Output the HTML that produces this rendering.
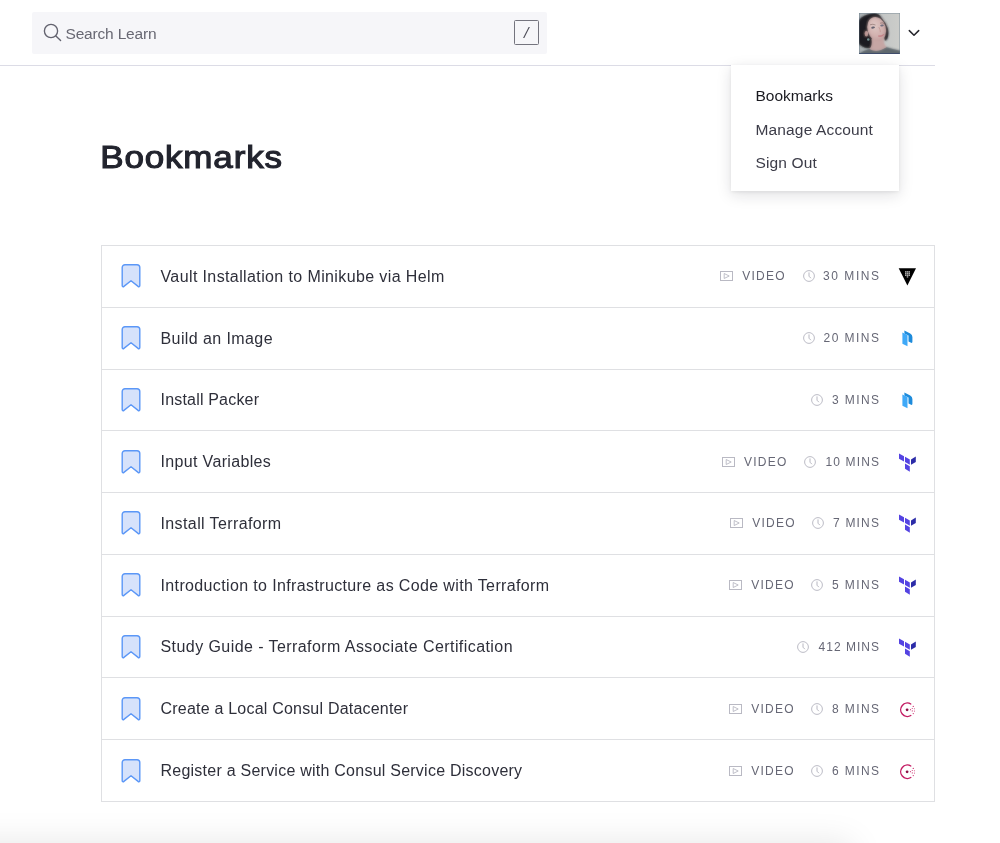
<!DOCTYPE html>
<html lang="en">
<head>
<meta charset="utf-8">
<title>Bookmarks</title>
<style>
*{box-sizing:border-box}
html,body{margin:0;padding:0;background:#fff}
body{width:1000px;height:843px;position:relative;overflow:hidden;font-family:"Liberation Sans",Arial,sans-serif;color:#2b2b36}
.page{position:absolute;left:0;top:0;width:1000px;height:843px;overflow:hidden;will-change:transform}
.hdr{position:absolute;left:0;top:0;width:935px;height:66px;border-bottom:1px solid #dcdce6}
.search{position:absolute;left:32px;top:12px;width:515px;height:42px;background:#f6f6f9;border-radius:2px}
.search svg.mag{position:absolute;left:11px;top:11px}
.search .ph{position:absolute;left:33.5px;top:1px;line-height:42px;font-size:15.5px;letter-spacing:-.18px;color:#686873}
.search .key{position:absolute;left:482px;top:8px;width:25px;height:25px;border:1px solid #74747e;border-radius:1.5px;font-family:"Liberation Mono",monospace;font-size:14px;line-height:27px;text-align:center;color:#4f4f5a}
.avatar{position:absolute;left:859px;top:13px;width:41px;height:41px;overflow:hidden}
.chev{position:absolute;left:907px;top:27px}
.menu{position:absolute;left:731px;top:65px;width:168px;height:126px;background:#fff;box-shadow:0 4px 14px rgba(20,20,40,.13),0 1px 4px rgba(20,20,40,.08)}
.menu a{position:absolute;left:24.5px;font-size:15.5px;line-height:20px;color:#3c3c48;text-decoration:none;white-space:nowrap}
h1{position:absolute;left:100.2px;top:133.8px;margin:0;font-size:35px;line-height:44px;font-weight:400;color:#22242e;-webkit-text-stroke:1.25px #22242e;letter-spacing:.85px;transform:scaleY(.88);transform-origin:0 33px}
.list{position:absolute;left:101px;top:245px;width:834px;border:1px solid #dfe0e3;border-bottom:none}
.row{height:61.78px;border-bottom:1px solid #dfe0e3;display:flex;align-items:center;position:relative}
.row .bm{position:absolute;left:19px;top:50%;margin-top:-13px}
.row .t{position:absolute;left:58.5px;top:50%;margin-top:-10.5px;line-height:22px;font-size:16px;letter-spacing:.34px;color:#2e2f3a;white-space:nowrap}
.meta{position:absolute;right:55px;top:50%;margin-top:-9px;height:18px;display:flex;align-items:center;font-size:12px;letter-spacing:1.3px;color:#666775;white-space:nowrap}
.meta svg{display:block;margin-right:8.5px}
.meta svg.vi{margin-right:9px}
.meta .v{margin-right:16.5px}
.logo{position:absolute;left:793px;top:50%;margin-top:-12px;width:24px;height:24px}
.foot{position:absolute;left:-40px;top:843px;width:892px;height:40px;box-shadow:0 0 34px rgba(0,0,0,.1)}
</style>
</head>
<body>
<div class="page">
<div class="hdr">
  <div class="search">
    <svg class="mag" width="20" height="20" viewBox="0 0 20 20" fill="none" stroke="#62626e" stroke-width="1.35" stroke-linecap="round"><circle cx="8" cy="8" r="6.6"/><path d="M12.9 12.9 17.6 17.6"/></svg>
    <span class="ph">Search Learn</span>
    <span class="key">/</span>
  </div>
  <div class="avatar">
    <svg width="41" height="41" viewBox="0 0 41 41">
      <defs>
        <linearGradient id="avbg" x1="0" y1="0" x2="1" y2="0"><stop offset="0" stop-color="#a7adb0"/><stop offset=".5" stop-color="#c2c5c5"/><stop offset="1" stop-color="#cccdca"/></linearGradient>
        <radialGradient id="avsk" cx=".45" cy=".35" r=".7"><stop offset="0" stop-color="#dec8c4"/><stop offset=".6" stop-color="#d2b1af"/><stop offset="1" stop-color="#bf9c9b"/></radialGradient>
        <filter id="avbl" x="-20%" y="-20%" width="140%" height="140%"><feGaussianBlur stdDeviation=".85"/></filter>
        <g id="avsh">
          <path d="M2.6 4.6Q7 1 15.5 .2Q20.4 .8 23 5.4Q27.4 10 28.8 15.4Q30 21 28.4 25.5L26 28 22 10 10 12 13.5 29 12.4 34.4Q8 36 3.6 33.4Q-3 30 -3 25V12Q-1 7.6 2.6 4.6Z" fill="#1d1b20"/>
          <path d="M12.5 26Q13.5 32 10.5 36.5Q18 40 27.5 34.5Q24.5 31.5 24.5 26Z" fill="#c6a6a4"/>
          <path d="M-3 44Q1 38.5 10.5 36Q18 40.5 27.5 34.2Q34 36 44 38.5V44Z" fill="#5e676d"/>
          <ellipse cx="17.7" cy="16" rx="9.2" ry="12.3" transform="rotate(-16 17.7 16)" fill="url(#avsk)"/>
          <ellipse cx="7.4" cy="20.6" rx="1.8" ry="2.8" fill="#c7a19e"/>
        </g>
      </defs>
      <rect width="41" height="41" fill="url(#avbg)"/>
      <use href="#avsh" filter="url(#avbl)"/>
      <use href="#avsh" opacity=".45"/>
      <g opacity=".8">
        <ellipse cx="14.1" cy="14.6" rx="1.9" ry="1" transform="rotate(-12 14.1 14.6)" fill="#4a4b5c"/>
        <ellipse cx="23" cy="12.5" rx="1.8" ry="1" transform="rotate(-12 23 12.5)" fill="#5b6074"/>
        <path d="M19.3 23Q22.3 23.4 24.8 21.4Q23.3 24.2 19.3 23Z" fill="#bf6f78" stroke="#c27780" stroke-width=".8"/>
        <path d="M19.8 14Q21.6 17 21.3 19.2" stroke="#c39a95" stroke-width="1" fill="none"/>
        <circle cx="9.3" cy="26.4" r="1.25" fill="#86aeac"/>
        <path d="M11 11.8Q14 10.6 16.5 12" stroke="#6d5552" stroke-width=".6" fill="none"/>
        <path d="M21 10.2Q23.5 9.3 25.5 10.6" stroke="#6d5552" stroke-width=".6" fill="none"/>
      </g>
      <rect x="0" y="40" width="41" height="1" fill="#222c58" opacity=".8"/>
      <rect x=".25" y=".25" width="40.5" height="40.5" fill="none" stroke="#5f7686" stroke-width=".5" opacity=".7"/>
    </svg>
  </div>
  <svg class="chev" width="14" height="12" viewBox="0 0 14 12" fill="none" stroke="#26262c" stroke-width="1.5" stroke-linecap="round" stroke-linejoin="round"><path d="M2.3 3.6 7 8.3 11.7 3.6"/></svg>
</div>

<h1>Bookmarks</h1>

<svg width="0" height="0" style="position:absolute">
  <defs>
    <symbol id="i-bm" viewBox="0 0 20 26"><path d="M4 1.7H16a2.8 2.8 0 0 1 2.8 2.8V22.6a1 1 0 0 1-1.7.8L10 17.8 2.9 23.4a1 1 0 0 1-1.7-.8V4.5A2.8 2.8 0 0 1 4 1.7Z" fill="#d6e2fb" stroke="#5b97f7" stroke-width="1.4" stroke-linejoin="round"/></symbol>
    <symbol id="i-vid" viewBox="0 0 13 10"><rect x=".5" y=".5" width="12" height="9" fill="none" stroke="#b9b9c3" stroke-width="1"/><path d="M4.2 2.5 9.2 5 4.2 7.5Z" fill="none" stroke="#b0b0bb" stroke-width=".8" stroke-linejoin="round"/></symbol>
    <symbol id="i-clk" viewBox="0 0 12 12"><circle cx="6" cy="6" r="5.4" fill="none" stroke="#bcbcc6" stroke-width="1"/><path d="M6 2.8V6.2L7.6 7.9" fill="none" stroke="#b0b0bb" stroke-width=".9" stroke-linecap="round"/></symbol>
    <symbol id="l-vault" viewBox="0 0 24 24"><path d="M3.7 4.2H21L12.4 21.5Z" fill="#000"/><g fill="#a6a6a6"><rect x="10.00" y="7.10" width="1.5" height="1.5"/><rect x="11.75" y="7.10" width="1.5" height="1.5"/><rect x="13.50" y="7.10" width="1.5" height="1.5"/><rect x="10.00" y="8.80" width="1.5" height="1.5"/><rect x="11.75" y="8.80" width="1.5" height="1.5"/><rect x="13.50" y="8.80" width="1.5" height="1.5"/><rect x="10.00" y="10.50" width="1.5" height="1.5"/><rect x="11.75" y="10.50" width="1.5" height="1.5"/><rect x="13.50" y="10.50" width="1.5" height="1.5"/><rect x="11.75" y="12.2" width="1.5" height="1.4"/></g></symbol>
    <symbol id="l-packer" viewBox="0 0 24 24"><path d="M9.4 4.6 15.2 7.4Q17.4 8.6 17.4 10.9V15.8Q17.4 17.4 16.1 16.8L13.5 15.6V9.6L9.4 7.6Z" fill="#1d8bdb"/><path d="M7.4 6.6 12.5 9.1V20.3L7.4 17.8Z" fill="#3fa9f8"/></symbol>
    <symbol id="l-tf" viewBox="0 0 24 24"><path d="M4 3.4 9 6.2V11.4L4 8.7Z" fill="#5443e2"/><path d="M10 6.7 14.8 9.4V14.7L10 11.9Z" fill="#5443e2"/><path d="M16 9.4 20.8 6.4V11.9L16 14.7Z" fill="#2c2ca8"/><path d="M10 13.4 14.8 16.2V21.7L10 18.7Z" fill="#5443e2"/></symbol>
    <symbol id="l-consul" viewBox="0 0 24 24"><path d="M15.8 6.98A6.7 6.7 0 1 0 15.8 18.52" fill="none" stroke="#c31c63" stroke-width="1.4" stroke-linecap="round"/><circle cx="12.1" cy="12.8" r="1.4" fill="#8d1248"/><g fill="#d2447f"><circle cx="15.5" cy="12.7" r=".6"/><circle cx="17.3" cy="11.5" r=".6"/><circle cx="17.3" cy="13.9" r=".6"/><circle cx="19.4" cy="11.7" r=".55"/><circle cx="19.4" cy="14.1" r=".55"/><circle cx="18.3" cy="9.4" r=".7"/><circle cx="18.3" cy="16.6" r=".7"/></g></symbol>
  </defs>
</svg>
<div class="list">
  <div class="row"><svg class="bm" width="20" height="26"><use href="#i-bm"/></svg><span class="t" style="letter-spacing:0.385px">Vault Installation to Minikube via Helm</span><div class="meta"><svg class="vi" width="13" height="10"><use href="#i-vid"/></svg><span class="v">VIDEO</span><svg width="12" height="12"><use href="#i-clk"/></svg><span style="letter-spacing:1.55px;margin-right:-1.55px">30 MINS</span></div><svg class="logo" width="24" height="24"><use href="#l-vault"/></svg></div>
  <div class="row"><svg class="bm" width="20" height="26"><use href="#i-bm"/></svg><span class="t" style="letter-spacing:0.41px">Build an Image</span><div class="meta"><svg width="12" height="12"><use href="#i-clk"/></svg><span style="letter-spacing:1.47px;margin-right:-1.47px">20 MINS</span></div><svg class="logo" width="24" height="24"><use href="#l-packer"/></svg></div>
  <div class="row"><svg class="bm" width="20" height="26"><use href="#i-bm"/></svg><span class="t" style="letter-spacing:0.19px">Install Packer</span><div class="meta"><svg width="12" height="12"><use href="#i-clk"/></svg><span style="letter-spacing:1.4px;margin-right:-1.4px">3 MINS</span></div><svg class="logo" width="24" height="24"><use href="#l-packer"/></svg></div>
  <div class="row"><svg class="bm" width="20" height="26"><use href="#i-bm"/></svg><span class="t" style="letter-spacing:0.34px">Input Variables</span><div class="meta"><svg class="vi" width="13" height="10"><use href="#i-vid"/></svg><span class="v">VIDEO</span><svg width="12" height="12" style="margin-right:9.3px"><use href="#i-clk"/></svg><span style="letter-spacing:1.13px;margin-right:-1.13px">10 MINS</span></div><svg class="logo" width="24" height="24"><use href="#l-tf"/></svg></div>
  <div class="row"><svg class="bm" width="20" height="26"><use href="#i-bm"/></svg><span class="t" style="letter-spacing:0.39px">Install Terraform</span><div class="meta"><svg class="vi" width="13" height="10"><use href="#i-vid"/></svg><span class="v">VIDEO</span><svg width="12" height="12"><use href="#i-clk"/></svg><span style="letter-spacing:1.2px;margin-right:-1.2px">7 MINS</span></div><svg class="logo" width="24" height="24"><use href="#l-tf"/></svg></div>
  <div class="row"><svg class="bm" width="20" height="26"><use href="#i-bm"/></svg><span class="t" style="letter-spacing:0.365px">Introduction to Infrastructure as Code with Terraform</span><div class="meta"><svg class="vi" width="13" height="10"><use href="#i-vid"/></svg><span class="v">VIDEO</span><svg width="12" height="12"><use href="#i-clk"/></svg><span style="letter-spacing:1.4px;margin-right:-1.4px">5 MINS</span></div><svg class="logo" width="24" height="24"><use href="#l-tf"/></svg></div>
  <div class="row"><svg class="bm" width="20" height="26"><use href="#i-bm"/></svg><span class="t" style="letter-spacing:0.43px">Study Guide - Terraform Associate Certification</span><div class="meta"><svg width="12" height="12" style="margin-right:9.5px"><use href="#i-clk"/></svg><span style="letter-spacing:1.02px;margin-right:-1.02px">412 MINS</span></div><svg class="logo" width="24" height="24"><use href="#l-tf"/></svg></div>
  <div class="row"><svg class="bm" width="20" height="26"><use href="#i-bm"/></svg><span class="t" style="letter-spacing:0.21px">Create a Local Consul Datacenter</span><div class="meta"><svg class="vi" width="13" height="10"><use href="#i-vid"/></svg><span class="v">VIDEO</span><svg width="12" height="12"><use href="#i-clk"/></svg><span style="letter-spacing:1.4px;margin-right:-1.4px">8 MINS</span></div><svg class="logo" width="24" height="24"><use href="#l-consul"/></svg></div>
  <div class="row"><svg class="bm" width="20" height="26"><use href="#i-bm"/></svg><span class="t" style="letter-spacing:0.24px">Register a Service with Consul Service Discovery</span><div class="meta"><svg class="vi" width="13" height="10"><use href="#i-vid"/></svg><span class="v">VIDEO</span><svg width="12" height="12"><use href="#i-clk"/></svg><span style="letter-spacing:1.4px;margin-right:-1.4px">6 MINS</span></div><svg class="logo" width="24" height="24"><use href="#l-consul"/></svg></div>
</div>

<div class="menu">
  <a style="top:20.7px;color:#1a1a20">Bookmarks</a>
  <a style="top:54.6px;letter-spacing:.15px">Manage Account</a>
  <a style="top:87.8px;letter-spacing:.14px">Sign Out</a>
</div>
<div class="foot"></div>
</div>
</body>
</html>
